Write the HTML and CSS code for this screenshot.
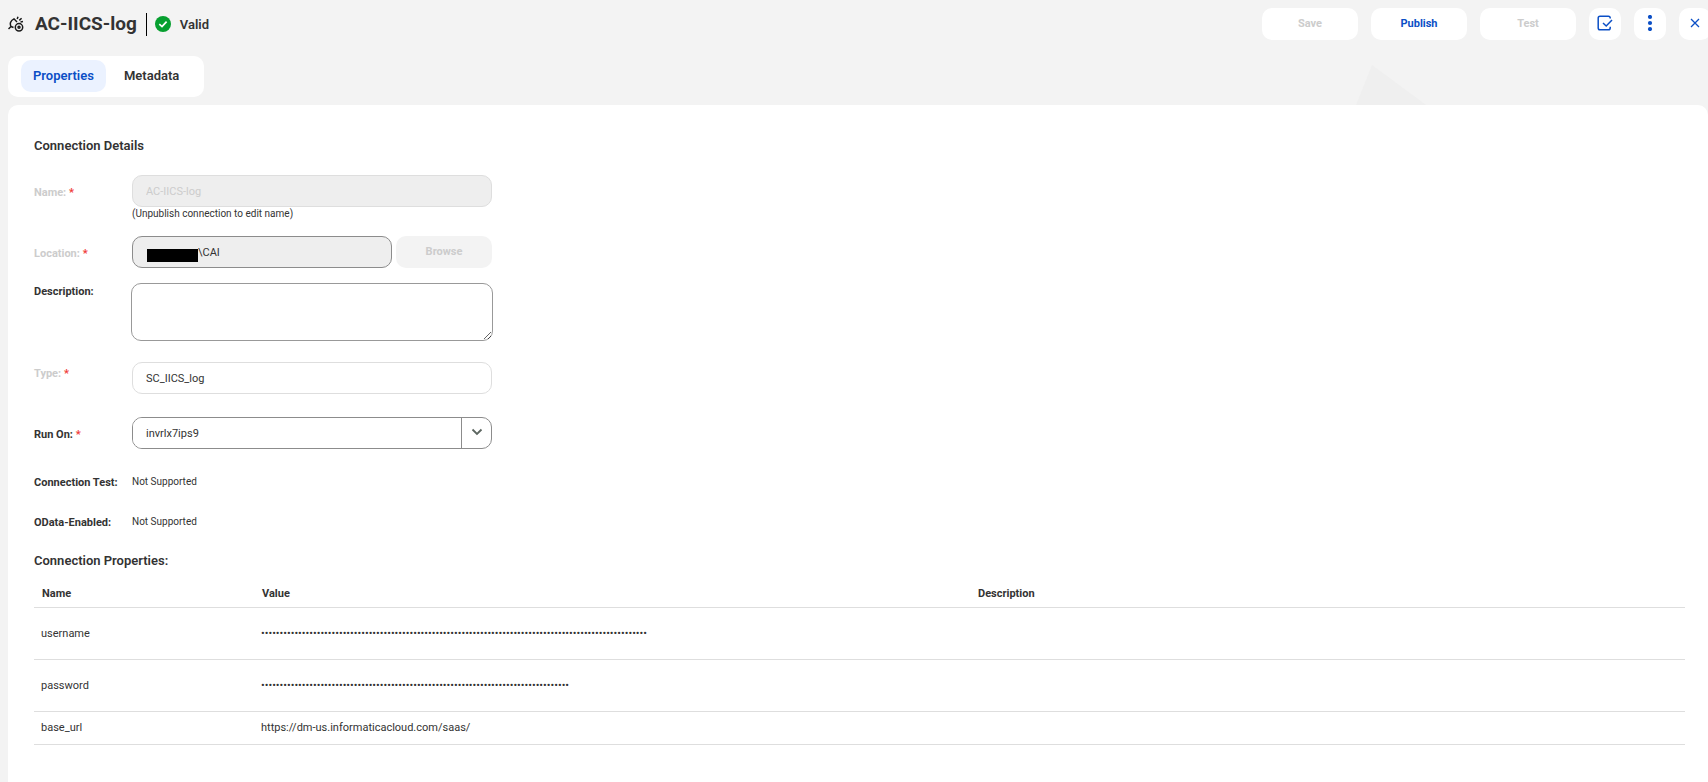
FILE: index.html
```
<!DOCTYPE html>
<html lang="en">
<head>
    <meta charset="UTF-8">
    <meta name="viewport" content="width=device-width, initial-scale=1.0">
    <title>AC-IICS-log</title>
    <link rel="stylesheet" href="styles.css">
</head>
<body>
    <header class="header">
        <svg class="conn-icon" width="16" height="16" viewBox="0 0 16 16" fill="none" stroke="#1a1a1a" stroke-width="1.5">
            <path d="M0.5 13L3 10.5M3 10.5C1.5 7.5 2.5 4.5 6 2.8L9 6M3 10.5L5.5 11.5"/>
            <path d="M9.2 3L10 0.8M11.3 4.4L13.6 2.2M12.5 6L15 5.6"/>
            <circle cx="11" cy="11.3" r="3.7"/>
            <circle cx="11" cy="11.3" r="1"/>
        </svg>
        <h1>AC-IICS-log</h1>
        <div class="status">
            <svg width="16" height="16" viewBox="0 0 16 16">
                <circle cx="8" cy="8" r="8" fill="#069f2f"/>
                <path d="M4.3 8.2L7 10.6L11.6 5.6" fill="none" stroke="#fff" stroke-width="1.7"/>
            </svg>
            <span>Valid</span>
        </div>
        <div class="actions">
            <button type="button" class="btn" disabled>Save</button>
            <button type="button" class="btn">Publish</button>
            <button type="button" class="btn" disabled>Test</button>
            <button type="button" class="btn btn-icon" aria-label="Validate">
                <svg width="16" height="16" viewBox="0 0 16 16" fill="none" stroke="#0b4fc6" stroke-width="1.5">
                    <path d="M13.2 3.6V3Q13.2 1.2 11.4 1.2H3Q1.2 1.2 1.2 3V13Q1.2 14.8 3 14.8H11.4Q13.2 14.8 13.2 13V11.8"/>
                    <path d="M6 8L9.2 11L15 5"/>
                </svg>
            </button>
            <button type="button" class="btn btn-icon" aria-label="More actions">
                <svg width="16" height="16" viewBox="0 0 16 16" fill="#0b4fc6">
                    <circle cx="8" cy="2" r="2.1"/>
                    <circle cx="8" cy="8" r="2.1"/>
                    <circle cx="8" cy="14" r="2.1"/>
                </svg>
            </button>
            <button type="button" class="btn btn-icon" aria-label="Close">
                <svg width="16" height="16" viewBox="0 0 16 16" fill="none" stroke="#0b4fc6" stroke-width="1.3">
                    <path d="M4 4L12 12M12 4L4 12"/>
                </svg>
            </button>
        </div>
    </header>

    <div class="tab-row">
        <nav class="tabs">
            <button type="button" class="tab active">Properties</button>
            <button type="button" class="tab">Metadata</button>
        </nav>
        <svg class="backdrop" width="70" height="40" viewBox="0 0 70 40" fill="#efefef">
            <path d="M0 40L16 0L70 40Z"/>
        </svg>
    </div>

    <main class="panel">
        <h2>Connection Details</h2>

        <form class="details">
            <div class="row row-name">
                <label for="name" class="muted">Name: <span class="req">*</span></label>
                <div class="field">
                    <input type="text" id="name" value="AC-IICS-log" disabled>
                    <p class="hint">(Unpublish connection to edit name)</p>
                </div>
            </div>
            <div class="row row-location">
                <label for="location" class="muted">Location: <span class="req">*</span></label>
                <div class="field location">
                    <div class="location-box">
                        <span class="redacted"></span>
                        <input type="text" id="location" value="\CAI" readonly>
                    </div>
                    <button type="button" class="btn btn-browse" disabled>Browse</button>
                </div>
            </div>
            <div class="row row-description">
                <label for="description">Description:</label>
                <textarea id="description"></textarea>
            </div>
            <div class="row row-type">
                <label for="type" class="muted">Type: <span class="req">*</span></label>
                <div class="field">
                    <input type="text" id="type" class="type" value="SC_IICS_log" readonly>
                </div>
            </div>
            <div class="row row-run">
                <label for="runOn">Run On: <span class="req">*</span></label>
                <div class="field select-box">
                    <select id="runOn">
                        <option>invrlx7ips9</option>
                    </select>
                    <span class="arrow">
                        <svg width="12" height="8" viewBox="0 0 12 8" fill="none" stroke="#5c6660" stroke-width="1.8">
                            <path d="M1.5 1.5L6 6L10.5 1.5"/>
                        </svg>
                    </span>
                </div>
            </div>
            <div class="row row-text">
                <span class="label">Connection Test:</span>
                <span class="value">Not Supported</span>
            </div>
            <div class="row row-text">
                <span class="label">OData-Enabled:</span>
                <span class="value">Not Supported</span>
            </div>
        </form>

        <h2 class="props-title">Connection Properties:</h2>
        <table class="props">
            <thead>
                <tr>
                    <th class="col-name">Name</th>
                    <th class="col-value">Value</th>
                    <th>Description</th>
                </tr>
            </thead>
            <tbody>
                <tr class="secret">
                    <td>username</td>
                    <td><input type="password" aria-label="username" value="xxxxxxxxxxxxxxxxxxxxxxxxxxxxxxxxxxxxxxxxxxxxxxxxxxxxxxxxxxxxxxxxxxxxxxxxxxxxxxxxxxxxxxxxxxxxxxxxxxxxxxxx" readonly></td>
                    <td></td>
                </tr>
                <tr class="secret">
                    <td>password</td>
                    <td><input type="password" aria-label="password" value="xxxxxxxxxxxxxxxxxxxxxxxxxxxxxxxxxxxxxxxxxxxxxxxxxxxxxxxxxxxxxxxxxxxxxxxxxxxxxxxxxxx" readonly></td>
                    <td></td>
                </tr>
                <tr>
                    <td>base_url</td>
                    <td>https://dm-us.informaticacloud.com/saas/</td>
                    <td></td>
                </tr>
            </tbody>
        </table>
    </main>
</body>
</html>
```

FILE: styles.css
```
* {
    box-sizing: border-box;
}

body {
    font-family: Roboto, sans-serif;
    font-size: 11px;
    color: #333333;
    background: #f3f3f3;
    margin: 0;
    min-height: 100vh;
    display: flex;
    flex-direction: column;
    overflow-x: hidden;
}

button, input, textarea, select {
    font-family: inherit;
    font-size: 11px;
    color: inherit;
}

svg {
    display: block;
}

h1, h2, p {
    margin: 0;
}

.header {
    display: flex;
    align-items: center;
    height: 48px;
    padding-left: 8px;
}

.header h1 {
    font-size: 19px;
    font-weight: 700;
    line-height: 24px;
    margin-left: 11px;
}

.status {
    display: flex;
    align-items: center;
    gap: 9px;
    height: 23px;
    margin-left: 9px;
    padding-left: 8px;
    border-left: 1px solid #000000;
    font-size: 13px;
    font-weight: 600;
}

.actions {
    display: flex;
    gap: 13px;
    margin-left: auto;
    margin-right: -3px;
}

.btn {
    width: 96px;
    height: 32px;
    padding: 0 0 2px;
    border: none;
    border-radius: 10px;
    background: #ffffff;
    color: #0b4fc6;
    font-size: 11px;
    font-weight: 700;
    cursor: pointer;
}

.btn:disabled {
    color: #cccccc;
    cursor: default;
}

.btn-icon {
    display: flex;
    align-items: center;
    justify-content: center;
    width: 32px;
}

.tab-row {
    display: flex;
    justify-content: space-between;
    align-items: flex-end;
    height: 57px;
    padding: 0 282px 0 8px;
}

.tabs {
    display: flex;
    align-self: flex-start;
    gap: 6px;
    margin-top: 8px;
    padding: 4px 13px 5px;
    background: #ffffff;
    border-radius: 10px;
}

.tab {
    height: 32px;
    padding: 0 12px 2px;
    border: none;
    border-radius: 10px;
    background: none;
    font-size: 13px;
    font-weight: 600;
    cursor: pointer;
}

.tab.active {
    background: #ebf2ff;
    color: #0b4fc6;
}

.panel {
    flex: 1;
    margin-left: 8px;
    padding: 32px 23px 32px 26px;
    background: #ffffff;
    border-radius: 10px 10px 0 0;
}

.panel h2 {
    font-size: 13px;
    font-weight: 600;
    line-height: 18px;
}

.details {
    margin-top: 20px;
}

.row {
    display: flex;
}

.row label,
.row .label {
    width: 98px;
    flex-shrink: 0;
    padding-top: 1px;
    font-weight: 700;
    line-height: 16px;
}

.row label.muted {
    color: #cccccc;
}

.req {
    color: #f03a3a;
}

.field {
    width: 360px;
}

.field input,
.field select {
    display: block;
    width: 100%;
    height: 32px;
    padding: 0 13px;
    border: 1px solid #dedede;
    border-radius: 10px;
    background: #ffffff;
    outline: none;
}

.field input:disabled {
    background: #eeeeee;
    color: #cccccc;
}

.hint {
    font-size: 10px;
    line-height: 14px;
}

.row-name label,
.row-location label,
.row-run label {
    padding-top: 10px;
}

.row-name {
    height: 61px;
}

.row-location {
    height: 47px;
}

.location {
    display: flex;
    gap: 4px;
}

.location-box {
    display: flex;
    align-items: center;
    width: 260px;
    height: 32px;
    padding-left: 14px;
    border: 1px solid #8c8c8c;
    border-radius: 10px;
    background: #eeeeee;
}

.location-box input {
    flex: 1;
    width: auto;
    height: 28px;
    min-width: 0;
    padding: 0;
    border: none;
    background: none;
}

.redacted {
    width: 51px;
    height: 13px;
    margin-top: 6px;
    background: #000000;
}

.btn-browse {
    background: #f3f3f3;
}

.row-description {
    height: 79px;
}

.row-description textarea {
    width: 362px;
    height: 58px;
    margin-left: -1px;
    padding: 8px 13px;
    border: 1px solid #999999;
    border-radius: 10px;
    outline: none;
}

.row-type {
    height: 55px;
}

.row-type label {
    padding-top: 4px;
}

.row-run {
    height: 57px;
}

.select-box {
    display: flex;
    height: 32px;
    border: 1px solid #8c8c8c;
    border-radius: 10px;
    overflow: hidden;
}

.select-box select {
    flex: 1;
    height: 30px;
    padding: 0 13px;
    border: none;
    border-radius: 0;
    appearance: none;
}

.arrow {
    display: flex;
    align-items: center;
    justify-content: center;
    width: 30px;
    padding-bottom: 2px;
    border-left: 1px solid #8c8c8c;
}

.row-text {
    height: 40px;
}

.value {
    font-size: 10px;
    line-height: 16px;
}

.panel .props-title {
    margin-top: -2px;
}

.props {
    width: 100%;
    margin-top: 8px;
    border-collapse: collapse;
    table-layout: fixed;
}

.props th,
.props td {
    height: 33px;
    padding: 0 7px;
    border-bottom: 1px solid #dedede;
    text-align: left;
}

.props th {
    height: 29px;
    padding: 2px 8px 0;
    font-weight: 700;
}

.props .secret td {
    height: 52px;
}

.props input {
    display: block;
    width: 100%;
    padding: 0;
    border: none;
    outline: none;
}

.props .col-name {
    width: 220px;
}

.props .col-value {
    width: 716px;
}
```
